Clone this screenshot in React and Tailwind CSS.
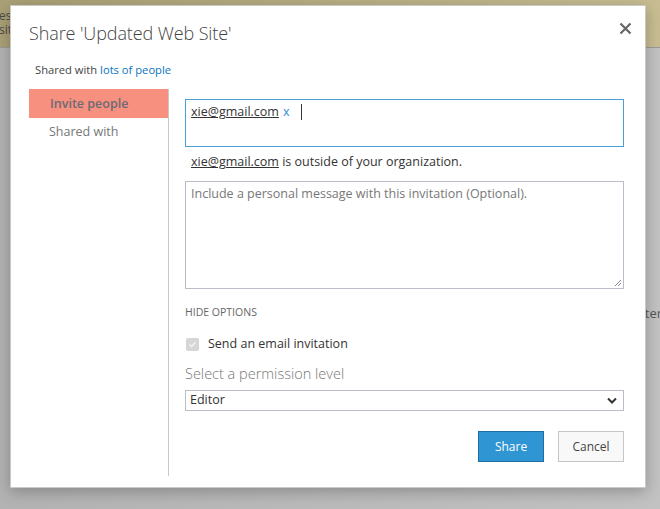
import React from 'react';

const font = { fontFamily: '"Open Sans", "Segoe UI", sans-serif' };

const Background = () => (
    <div className="absolute inset-0 flex flex-col">
        <div className="h-[48px] bg-gradient-to-r from-[#aaa076] to-[#c8bd92] border-b border-[#9a9a9a] text-[12px] text-[#4a4a4a] leading-[13px] pt-[9px] flex flex-col gap-[1px]">
            <div className="-ml-[1px]">es:</div>
            <div className="-ml-[1px]">sit</div>
        </div>
        <div className="flex-1 bg-gradient-to-r from-[#b3b3b3] to-[#c2c2c2] flex justify-end pt-[256px] text-[13px] text-[#555]">
            <span className="mr-[-2px]">ter</span>
        </div>
    </div>
);

const App = () => {
    return (
        <div className="relative w-[660px] h-[509px] overflow-hidden" style={font}>
            <Background />

            {/* dialog */}
            <div className="absolute left-[10px] top-[5px] w-[636px] h-[483px] bg-white border border-[#c9c9c9] shadow-[0_4px_14px_rgba(0,0,0,0.25)] flex flex-col">
                <div className="flex justify-between items-start pl-[18px] pr-[13px] pt-[14px]">
                    <h1 className="text-[18px] font-light text-[#444] leading-[26px] tracking-[-0.1px]">Share 'Updated Web Site'</h1>
                    <button className="mt-[2px] text-[#666]">
                        <svg width="13" height="13" viewBox="0 0 13 13">
                            <path d="M1.5 1.5 L11.5 11.5 M11.5 1.5 L1.5 11.5" stroke="#666" strokeWidth="2.2" fill="none" />
                        </svg>
                    </button>
                </div>

                <div className="pl-[24px] mt-[16px] text-[11.2px] text-[#444] leading-[16px]">
                    Shared with <span className="text-[#0a75c2]">lots of people</span>
                </div>

                <div className="flex flex-1 mt-[11px] pl-[18px] pb-[11px]">
                    {/* left nav */}
                    <div className="w-[140px] border-r border-[#c8c8c8] flex flex-col">
                        <div className="h-[29px] bg-[#f8907f] pl-[21px] pt-[1px] flex items-center text-[12.5px] font-semibold text-[#6b6b75]">Invite people</div>
                        <div className="h-[28px] pl-[20px] flex items-center text-[12.5px] text-[#777]">Shared with</div>
                    </div>

                    {/* right content */}
                    <div className="flex-1 pl-[16px] pr-[21px] pt-[10px] flex flex-col">
                        <div className="h-[48px] border border-[#4a9fd8] px-[5px] pt-[3px] flex items-start text-[12.5px] leading-[18px]">
                            <span className="text-[#333] underline">xie@gmail.com</span>
                            <span className="text-[#2e8fd6] ml-[4px]">x</span>
                            <span className="ml-[12px] mt-[1px] w-[1px] h-[16px] bg-[#333]"></span>
                        </div>

                        <div className="mt-[6px] pl-[6px] text-[12.5px] text-[#333] leading-[18px]">
                            <span className="underline">xie@gmail.com</span> is outside of your organization.
                        </div>

                        <div className="relative mt-[10px] h-[108px] border border-[#b9bcc9] px-[5px] pt-[3px] text-[12.5px] text-[#777] leading-[18px]">
                            Include a personal message with this invitation (Optional).
                            <svg className="absolute right-[1px] bottom-[1px]" width="9" height="9" viewBox="0 0 9 9">
                                <path d="M8 2 L2 8 M8 5 L5 8" stroke="#888" strokeWidth="1" fill="none" />
                            </svg>
                        </div>

                        <div className="mt-[16px] text-[10.5px] text-[#666] leading-[14px]">HIDE OPTIONS</div>

                        <div className="mt-[16px] flex items-center">
                            <span className="w-[13px] h-[13px] ml-[1px] rounded-[2px] bg-[#d6d6d6] flex items-center justify-center">
                                <svg width="9" height="9" viewBox="0 0 9 9">
                                    <path d="M1.5 4.5 L3.6 6.6 L7.5 2.2" stroke="#f2f2f2" strokeWidth="1.6" fill="none" />
                                </svg>
                            </span>
                            <span className="ml-[9px] text-[12.5px] text-[#333] leading-[18px]">Send an email invitation</span>
                        </div>

                        <div className="mt-[11px] text-[14.5px] font-light text-[#777] leading-[20px]">Select a permission level</div>

                        <div className="mt-[6px] h-[21px] border border-[#b9bcc9] pl-[4px] pr-[6px] flex items-center justify-between text-[12.5px] text-[#333]">
                            <span>Editor</span>
                            <svg width="10" height="7" viewBox="0 0 10 7">
                                <path d="M1 1.5 L5 5.5 L9 1.5" stroke="#333" strokeWidth="2" fill="none" />
                            </svg>
                        </div>

                        <div className="mt-[20px] flex justify-end gap-[14px]">
                            <button className="w-[66px] h-[31px] bg-[#2f95d3] border border-[#1e6da3] text-white text-[12px]">Share</button>
                            <button className="w-[66px] h-[31px] bg-[#f8f8f8] border border-[#c6c6c6] text-[#444] text-[12px]">Cancel</button>
                        </div>
                    </div>
                </div>
            </div>
        </div>
    );
};

export default App;
